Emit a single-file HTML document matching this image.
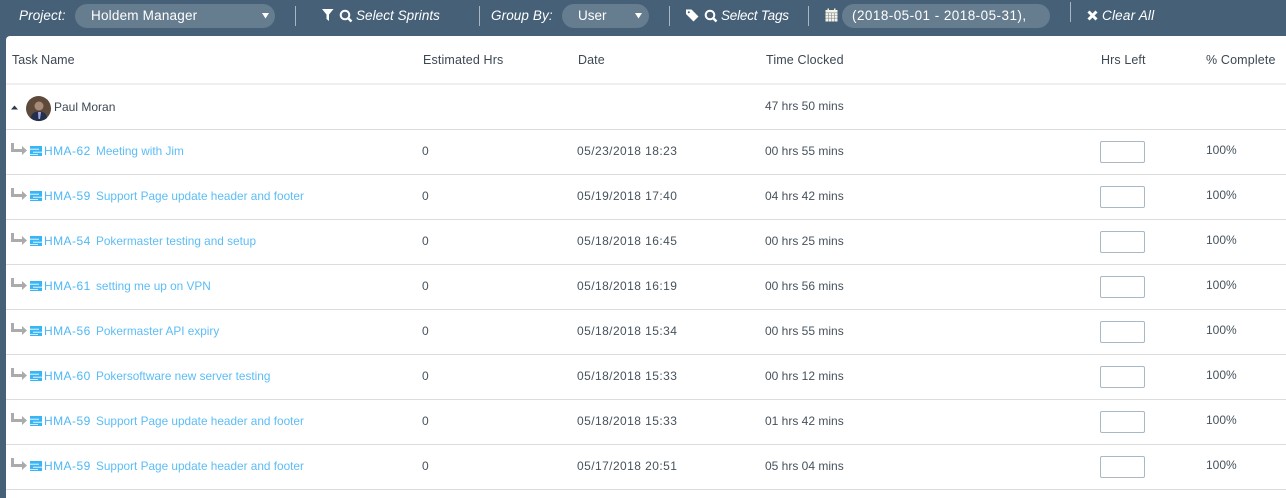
<!DOCTYPE html>
<html><head><meta charset="utf-8">
<style>
*{box-sizing:border-box}
html,body{margin:0;padding:0}
body{width:1286px;height:498px;overflow:hidden;background:#456077;position:relative;font-family:"Liberation Sans",sans-serif;color:#3d4a55;font-size:12px}
#panel{position:absolute;left:6px;top:36px;width:1280px;height:462px;background:#fff;border-top-left-radius:4px}
.pill{position:absolute;top:4px;height:24px;border-radius:12px;background:#667c8f;color:#fff;font-size:13.5px;line-height:24px;white-space:nowrap}
.sep{position:absolute;width:1px;background:#a9b6c1;top:6px;height:20px}
.it{position:absolute;top:7px;color:#fff;font-style:italic;font-size:13.5px;line-height:17px;white-space:nowrap}
.th{position:absolute;top:53px;font-size:12.5px;line-height:15px;color:#3c4853;white-space:nowrap}
.l{position:absolute;left:6px;width:1280px;height:1px;background:#dcdcdc}
.lnk{color:#4db8f5;font-size:12px;line-height:15px;position:absolute;white-space:nowrap;left:44px;letter-spacing:.45px}
.ti{color:#5cbdf6;font-size:11.8px;line-height:15px;position:absolute;white-space:nowrap;left:96px}
.c{position:absolute;font-size:12px;line-height:15px;color:#46525c;white-space:nowrap}
.d{position:absolute;left:577px;font-size:12px;line-height:15px;color:#46525c;white-space:nowrap;letter-spacing:.43px}
.inp{position:absolute;left:1100px;width:45px;height:22px;border:1px solid #a9b8c5;border-radius:2px;background:#fff}
svg{position:absolute;overflow:visible}
</style></head><body>
<div id="panel"></div>

<div class="it" style="left:19px;letter-spacing:.1px">Project:</div>
<div class="pill" style="left:75px;width:200px;padding-left:16px;letter-spacing:.2px">Holdem Manager</div>
<svg style="left:262px;top:13px" width="8" height="6"><path d="M0 0H7L3.500 5.500Z" fill="#fff"/></svg>
<div class="sep" style="left:295px"></div>
<svg style="left:322px;top:9px" width="12" height="12" viewBox="0 0 12 12"><path d="M0 0H11.500L7 5.500V12L4.500 10V5.500Z" fill="#fff"/></svg>
<svg style="left:339px;top:9px" width="14" height="14" viewBox="0 0 14 14"><circle cx="6" cy="6" r="4.300" fill="none" stroke="#fff" stroke-width="2"/><path d="M9 9L12.500 12.500" stroke="#fff" stroke-width="2.500"/></svg>
<div class="it" style="left:356px;letter-spacing:.05px">Select Sprints</div>
<div class="sep" style="left:479px"></div>
<div class="it" style="left:491px;letter-spacing:.1px">Group By:</div>
<div class="pill" style="left:562px;width:87px;padding-left:16px">User</div>
<svg style="left:635px;top:13px" width="8" height="6"><path d="M0 0H7L3.500 5.500Z" fill="#fff"/></svg>
<div class="sep" style="left:669px"></div>
<svg style="left:686px;top:9px" width="13" height="13" viewBox="0 0 13 13"><path d="M0 0.500H5.500L12.500 7.500L7.500 12.500L0 5Z" fill="#fff"/><circle cx="2.800" cy="3.200" r="1" fill="#456077"/></svg>
<svg style="left:704px;top:9px" width="14" height="14" viewBox="0 0 14 14"><circle cx="6" cy="6" r="4.300" fill="none" stroke="#fff" stroke-width="2"/><path d="M9 9L12.500 12.500" stroke="#fff" stroke-width="2.500"/></svg>
<div class="it" style="left:721px;letter-spacing:-.2px">Select Tags</div>
<div class="sep" style="left:808px"></div>
<svg style="left:825px;top:8px" width="13" height="14" viewBox="0 0 13 14"><rect x="0.500" y="2" width="12" height="11.500" fill="#f6f2e4"/><rect x="2.500" y="0.500" width="1.500" height="3" fill="#f6f2e4"/><rect x="9" y="0.500" width="1.500" height="3" fill="#f6f2e4"/><path d="M0.500 4.800H12.500M0.500 7.500H12.500M0.500 10.200H12.500M3.500 4.800V13.500M6.500 4.800V13.500M9.500 4.800V13.500" stroke="#7d8d99" stroke-width="0.600"/></svg>
<div class="pill" style="left:842px;width:208px;padding-left:10px;letter-spacing:.45px">(2018-05-01 - 2018-05-31),</div>
<div class="sep" style="left:1070px;top:2px"></div>
<svg style="left:1087px;top:10px" width="11" height="11" viewBox="0 0 11 11"><path d="M1.500 1.500L9.500 9.500M9.500 1.500L1.500 9.500" stroke="#fff" stroke-width="3"/></svg>
<div class="it" style="left:1102px;letter-spacing:.2px">Clear All</div>

<div class="th" style="left:12px">Task Name</div>
<div class="th" style="left:423px;letter-spacing:.15px">Estimated Hrs</div>
<div class="th" style="left:578px;letter-spacing:.1px">Date</div>
<div class="th" style="left:766px;letter-spacing:.15px">Time Clocked</div>
<div class="th" style="left:1101px;letter-spacing:.1px">Hrs Left</div>
<div class="th" style="left:1206px;letter-spacing:.15px">% Complete</div>
<div class="l" style="top:83px;height:2px;background:#efefef"></div>

<svg style="left:11px;top:105px" width="8" height="5"><path d="M0 4.500L3.500 0.500L7 4.500Z" fill="#2e3a46"/></svg>
<svg style="left:26px;top:96px" width="25" height="25" viewBox="0 0 25 25"><circle cx="12.500" cy="12.500" r="12.500" fill="#5d4a3a"/><circle cx="13" cy="10" r="4.500" fill="#a98a78"/><path d="M4.500 22C6 16.500 9 15.500 13 15.500S20 16.500 21 22A12.500 12.500 0 0 1 4.500 22Z" fill="#22304d"/><path d="M12 16H15L14 23H12.500Z" fill="#a9a6dc"/></svg>
<div class="c" style="left:54px;top:100px;color:#3c4853">Paul Moran</div>
<div class="c" style="left:765px;top:99px">47 hrs 50 mins</div>
<div class="l" style="top:129px"></div>

<svg style="left:11px;top:143px" width="16" height="13" viewBox="0 0 16 13"><path d="M1.500 0V7.500H12" fill="none" stroke="#ababab" stroke-width="3"/><path d="M11 3L16 7.500L11 12Z" fill="#ababab"/></svg>
<svg style="left:30px;top:146px" width="12" height="10" viewBox="0 0 12 10"><rect width="12" height="10" fill="#39b5f5"/><path d="M0 3.200H9M3 6.200H12M0 8.600H8" stroke="#fff" stroke-width="0.800"/></svg>
<div class="lnk" style="top:144px">HMA-62</div><div class="ti" style="top:144px">Meeting with Jim</div>
<div class="c" style="left:422px;top:144px">0</div>
<div class="d" style="top:144px">05/23/2018 18:23</div>
<div class="c" style="left:765px;top:144px">00 hrs 55 mins</div>
<div class="inp" style="top:141px"></div>
<div class="c" style="left:1206px;top:143px">100%</div>
<div class="l" style="top:174px"></div>

<svg style="left:11px;top:188px" width="16" height="13" viewBox="0 0 16 13"><path d="M1.500 0V7.500H12" fill="none" stroke="#ababab" stroke-width="3"/><path d="M11 3L16 7.500L11 12Z" fill="#ababab"/></svg>
<svg style="left:30px;top:191px" width="12" height="10" viewBox="0 0 12 10"><rect width="12" height="10" fill="#39b5f5"/><path d="M0 3.200H9M3 6.200H12M0 8.600H8" stroke="#fff" stroke-width="0.800"/></svg>
<div class="lnk" style="top:189px">HMA-59</div><div class="ti" style="top:189px">Support Page update header and footer</div>
<div class="c" style="left:422px;top:189px">0</div>
<div class="d" style="top:189px">05/19/2018 17:40</div>
<div class="c" style="left:765px;top:189px">04 hrs 42 mins</div>
<div class="inp" style="top:186px"></div>
<div class="c" style="left:1206px;top:188px">100%</div>
<div class="l" style="top:219px"></div>

<svg style="left:11px;top:233px" width="16" height="13" viewBox="0 0 16 13"><path d="M1.500 0V7.500H12" fill="none" stroke="#ababab" stroke-width="3"/><path d="M11 3L16 7.500L11 12Z" fill="#ababab"/></svg>
<svg style="left:30px;top:236px" width="12" height="10" viewBox="0 0 12 10"><rect width="12" height="10" fill="#39b5f5"/><path d="M0 3.200H9M3 6.200H12M0 8.600H8" stroke="#fff" stroke-width="0.800"/></svg>
<div class="lnk" style="top:234px">HMA-54</div><div class="ti" style="top:234px">Pokermaster testing and setup</div>
<div class="c" style="left:422px;top:234px">0</div>
<div class="d" style="top:234px">05/18/2018 16:45</div>
<div class="c" style="left:765px;top:234px">00 hrs 25 mins</div>
<div class="inp" style="top:231px"></div>
<div class="c" style="left:1206px;top:233px">100%</div>
<div class="l" style="top:264px"></div>

<svg style="left:11px;top:278px" width="16" height="13" viewBox="0 0 16 13"><path d="M1.500 0V7.500H12" fill="none" stroke="#ababab" stroke-width="3"/><path d="M11 3L16 7.500L11 12Z" fill="#ababab"/></svg>
<svg style="left:30px;top:281px" width="12" height="10" viewBox="0 0 12 10"><rect width="12" height="10" fill="#39b5f5"/><path d="M0 3.200H9M3 6.200H12M0 8.600H8" stroke="#fff" stroke-width="0.800"/></svg>
<div class="lnk" style="top:279px">HMA-61</div><div class="ti" style="top:279px">setting me up on VPN</div>
<div class="c" style="left:422px;top:279px">0</div>
<div class="d" style="top:279px">05/18/2018 16:19</div>
<div class="c" style="left:765px;top:279px">00 hrs 56 mins</div>
<div class="inp" style="top:276px"></div>
<div class="c" style="left:1206px;top:278px">100%</div>
<div class="l" style="top:309px"></div>

<svg style="left:11px;top:323px" width="16" height="13" viewBox="0 0 16 13"><path d="M1.500 0V7.500H12" fill="none" stroke="#ababab" stroke-width="3"/><path d="M11 3L16 7.500L11 12Z" fill="#ababab"/></svg>
<svg style="left:30px;top:326px" width="12" height="10" viewBox="0 0 12 10"><rect width="12" height="10" fill="#39b5f5"/><path d="M0 3.200H9M3 6.200H12M0 8.600H8" stroke="#fff" stroke-width="0.800"/></svg>
<div class="lnk" style="top:324px">HMA-56</div><div class="ti" style="top:324px">Pokermaster API expiry</div>
<div class="c" style="left:422px;top:324px">0</div>
<div class="d" style="top:324px">05/18/2018 15:34</div>
<div class="c" style="left:765px;top:324px">00 hrs 55 mins</div>
<div class="inp" style="top:321px"></div>
<div class="c" style="left:1206px;top:323px">100%</div>
<div class="l" style="top:354px"></div>

<svg style="left:11px;top:368px" width="16" height="13" viewBox="0 0 16 13"><path d="M1.500 0V7.500H12" fill="none" stroke="#ababab" stroke-width="3"/><path d="M11 3L16 7.500L11 12Z" fill="#ababab"/></svg>
<svg style="left:30px;top:371px" width="12" height="10" viewBox="0 0 12 10"><rect width="12" height="10" fill="#39b5f5"/><path d="M0 3.200H9M3 6.200H12M0 8.600H8" stroke="#fff" stroke-width="0.800"/></svg>
<div class="lnk" style="top:369px">HMA-60</div><div class="ti" style="top:369px">Pokersoftware new server testing</div>
<div class="c" style="left:422px;top:369px">0</div>
<div class="d" style="top:369px">05/18/2018 15:33</div>
<div class="c" style="left:765px;top:369px">00 hrs 12 mins</div>
<div class="inp" style="top:366px"></div>
<div class="c" style="left:1206px;top:368px">100%</div>
<div class="l" style="top:399px"></div>

<svg style="left:11px;top:413px" width="16" height="13" viewBox="0 0 16 13"><path d="M1.500 0V7.500H12" fill="none" stroke="#ababab" stroke-width="3"/><path d="M11 3L16 7.500L11 12Z" fill="#ababab"/></svg>
<svg style="left:30px;top:416px" width="12" height="10" viewBox="0 0 12 10"><rect width="12" height="10" fill="#39b5f5"/><path d="M0 3.200H9M3 6.200H12M0 8.600H8" stroke="#fff" stroke-width="0.800"/></svg>
<div class="lnk" style="top:414px">HMA-59</div><div class="ti" style="top:414px">Support Page update header and footer</div>
<div class="c" style="left:422px;top:414px">0</div>
<div class="d" style="top:414px">05/18/2018 15:33</div>
<div class="c" style="left:765px;top:414px">01 hrs 42 mins</div>
<div class="inp" style="top:411px"></div>
<div class="c" style="left:1206px;top:413px">100%</div>
<div class="l" style="top:444px"></div>

<svg style="left:11px;top:458px" width="16" height="13" viewBox="0 0 16 13"><path d="M1.500 0V7.500H12" fill="none" stroke="#ababab" stroke-width="3"/><path d="M11 3L16 7.500L11 12Z" fill="#ababab"/></svg>
<svg style="left:30px;top:461px" width="12" height="10" viewBox="0 0 12 10"><rect width="12" height="10" fill="#39b5f5"/><path d="M0 3.200H9M3 6.200H12M0 8.600H8" stroke="#fff" stroke-width="0.800"/></svg>
<div class="lnk" style="top:459px">HMA-59</div><div class="ti" style="top:459px">Support Page update header and footer</div>
<div class="c" style="left:422px;top:459px">0</div>
<div class="d" style="top:459px">05/17/2018 20:51</div>
<div class="c" style="left:765px;top:459px">05 hrs 04 mins</div>
<div class="inp" style="top:456px"></div>
<div class="c" style="left:1206px;top:458px">100%</div>
<div class="l" style="top:489px"></div>
</body></html>
